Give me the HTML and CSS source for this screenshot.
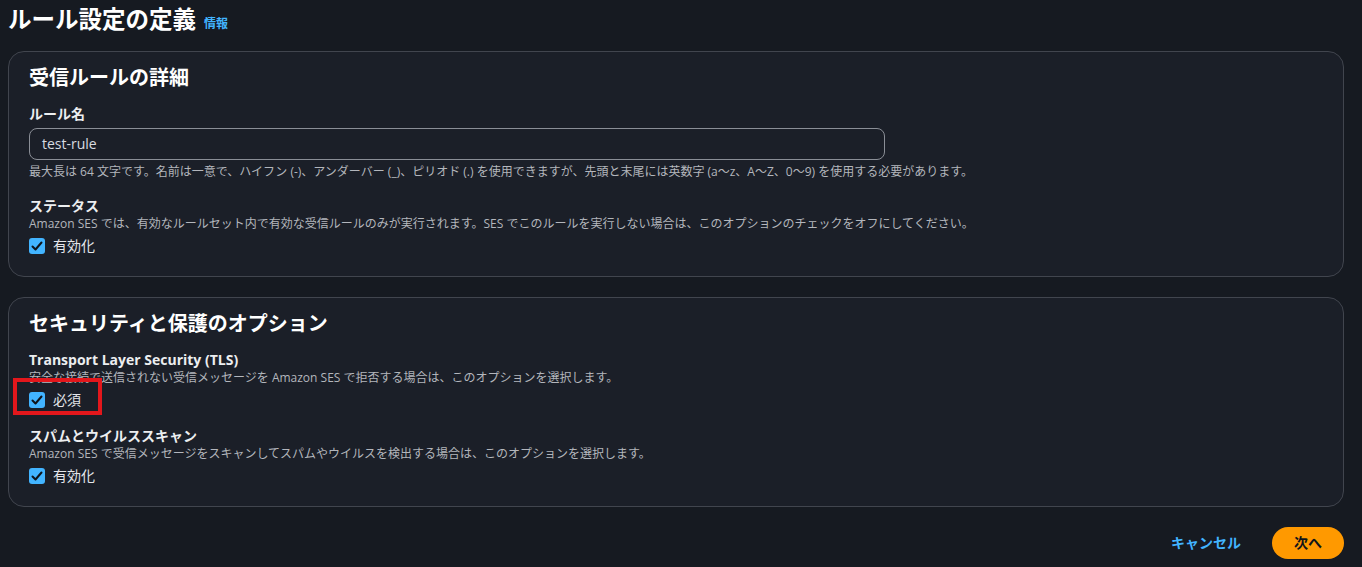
FILE: index.html
```html
<!DOCTYPE html>
<html lang="ja">
<head>
<meta charset="utf-8">
<title>ルール設定の定義</title>
<link rel="stylesheet" href="styles.css">
</head>
<body>
<main class="page">
  <header class="page-header">
    <h1 class="page-title">ルール設定の定義</h1>
    <a class="info-link" href="#">情報</a>
  </header>

  <section class="container">
    <h2 class="container-title">受信ルールの詳細</h2>

    <div class="field">
      <div class="field-label">ルール名</div>
      <div class="input">test-rule</div>
      <div class="field-hint">最大長は 64 文字です。名前は一意で、ハイフン (-)、アンダーバー (_)、ピリオド (.) を使用できますが、先頭と末尾には英数字 (a～z、A～Z、0～9) を使用する必要があります。</div>
    </div>

    <div class="field">
      <div class="field-label">ステータス</div>
      <div class="field-desc">Amazon SES では、有効なルールセット内で有効な受信ルールのみが実行されます。SES でこのルールを実行しない場合は、このオプションのチェックをオフにしてください。</div>
      <label class="checkbox-row">
        <span class="checkbox"><svg viewBox="0 0 16 16" width="16" height="16"><polyline points="3.5,8.5 6.5,11.5 12.5,4.5" fill="none" stroke="#0f141a" stroke-width="2" stroke-linecap="round" stroke-linejoin="round"/></svg></span>
        <span class="checkbox-label">有効化</span>
      </label>
    </div>
  </section>

  <section class="container">
    <h2 class="container-title">セキュリティと保護のオプション</h2>

    <div class="field">
      <div class="field-label">Transport Layer Security (TLS)</div>
      <div class="field-desc">安全な接続で送信されない受信メッセージを Amazon SES で拒否する場合は、このオプションを選択します。</div>
      <label class="checkbox-row">
        <span class="checkbox"><svg viewBox="0 0 16 16" width="16" height="16"><polyline points="3.5,8.5 6.5,11.5 12.5,4.5" fill="none" stroke="#0f141a" stroke-width="2" stroke-linecap="round" stroke-linejoin="round"/></svg></span>
        <span class="checkbox-label">必須</span>
        <span class="highlight"></span>
      </label>
    </div>

    <div class="field">
      <div class="field-label">スパムとウイルススキャン</div>
      <div class="field-desc">Amazon SES で受信メッセージをスキャンしてスパムやウイルスを検出する場合は、このオプションを選択します。</div>
      <label class="checkbox-row">
        <span class="checkbox"><svg viewBox="0 0 16 16" width="16" height="16"><polyline points="3.5,8.5 6.5,11.5 12.5,4.5" fill="none" stroke="#0f141a" stroke-width="2" stroke-linecap="round" stroke-linejoin="round"/></svg></span>
        <span class="checkbox-label">有効化</span>
      </label>
    </div>
  </section>

  <footer class="actions">
    <a class="btn-link" href="#">キャンセル</a>
    <button class="btn-primary" type="button">次へ</button>
  </footer>
</main>
</body>
</html>
```

FILE: styles.css
```css
* { box-sizing: border-box; }

html, body {
  margin: 0;
  padding: 0;
  background: #161a21;
}

body {
  font-family: "Open Sans", "Noto Sans CJK JP", sans-serif;
  color: #e9ebed;
  font-size: 14px;
  line-height: 20px;
}

.page {
  padding: 4px 18px 0 8px;
}

.page-header {
  display: flex;
  align-items: baseline;
  gap: 8px;
  height: 30px;
}

.page-title {
  margin: 0;
  font-size: 23.5px;
  line-height: 30px;
  font-weight: 700;
  color: #ffffff;
}

.info-link {
  font-size: 12px;
  font-weight: 700;
  color: #42b4ff;
  text-decoration: none;
}

.container {
  margin-top: 17px;
  background: #1b1f28;
  border: 1px solid #41454e;
  border-radius: 16px;
  padding: 14px 20px 20px 20px;
}

.container + .container {
  margin-top: 20px;
}

.container-title {
  margin: 0;
  font-size: 20px;
  line-height: 24px;
  font-weight: 700;
  color: #ffffff;
}

.field {
  margin-top: 16px;
}

.container-title + .field {
  margin-top: 14px;
}

.field-label {
  font-size: 14px;
  line-height: 20px;
  font-weight: 700;
  color: #eceef0;
}

.input {
  margin-top: 4px;
  width: 856px;
  height: 32px;
  border: 1px solid #8a8e96;
  border-radius: 8px;
  padding: 5px 12px;
  font-size: 14px;
  line-height: 20px;
  color: #d8dbe0;
}

.field-hint,
.field-desc {
  font-size: 12px;
  line-height: 16px;
  color: #b3b6bc;
}

.field-hint {
  margin-top: 4px;
}

.checkbox-row {
  position: relative;
  margin-top: 4px;
  display: flex;
  align-items: center;
  gap: 8px;
  height: 20px;
}

.checkbox {
  width: 16px;
  height: 16px;
  border-radius: 3px;
  background: #42b4ff;
  display: block;
}

.checkbox svg { display: block; }

.checkbox-label {
  font-size: 14px;
  line-height: 20px;
  color: #e4e6ea;
}

.highlight {
  position: absolute;
  left: -16px;
  top: -12px;
  width: 89px;
  height: 37px;
  border: 4px solid #e3171c;
}

.actions {
  margin-top: 20px;
  display: flex;
  justify-content: flex-end;
  align-items: center;
  gap: 11px;
}

.btn-link {
  font-size: 14px;
  font-weight: 700;
  line-height: 20px;
  color: #42b4ff;
  text-decoration: none;
  padding: 6px 20px;
}

.btn-primary {
  height: 32px;
  width: 72px;
  border: none;
  border-radius: 16px;
  background: #ff9900;
  color: #0f141a;
  font-family: inherit;
  font-size: 14px;
  font-weight: 700;
  line-height: 20px;
  padding: 0;
}
```
